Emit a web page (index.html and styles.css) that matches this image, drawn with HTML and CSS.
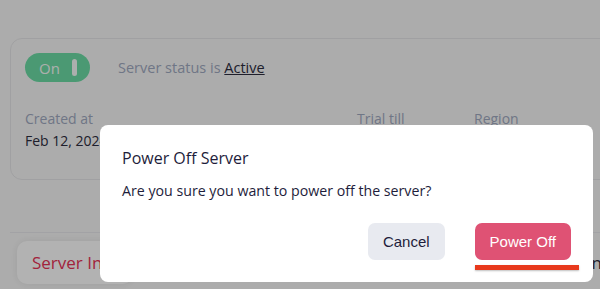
FILE: index.html
```html
<!DOCTYPE html>
<html lang="en">
<head>
  <meta charset="UTF-8" />
  <title>Server</title>
  <link rel="stylesheet" href="styles.css">
</head>
<body>

  <div class="page">
    <!-- Server card -->
    <div class="card">
      <div class="status-row">
        <div class="toggle">
          <span>On</span>
          <span class="knob"></span>
        </div>
        <p class="status">Server status is <a href="#">Active</a></p>
      </div>
      <div class="meta">
        <div>
          <div class="label">Created at</div>
          <div class="value">Feb 12, 2024</div>
        </div>
        <div>
          <div class="label">Trial till</div>
          <div class="value">Mar 12, 2024</div>
        </div>
        <div>
          <div class="label">Region</div>
          <div class="value">Frankfurt</div>
        </div>
      </div>
    </div>

    <!-- Tabs -->
    <div class="tabs">
      <div class="tab active">Server Info</div>
      <div class="tab last">Domain</div>
    </div>
  </div>

  <div class="overlay">
    <div class="dialog">
      <h2>Power Off Server</h2>
      <p>Are you sure you want to power off the server?</p>
      <div class="actions">
        <button class="cancel">Cancel</button>
        <button class="danger">Power Off</button>
        <span class="mark"></span>
      </div>
    </div>
  </div>

</body>
</html>
```

FILE: styles.css
```css
html, body {
  margin: 0;
  height: 100%;
  overflow: hidden;
}

body {
  font-family: 'Open Sans', sans-serif;
  background-color: #f7f7f7;
  color: #2f2f44;
}

.page {
  padding: 38px 0 0 10px;
}

.card {
  width: 700px;
  border: 1px solid #e6e6e8;
  border-radius: 12px;
  padding: 14px 14px 28px 14px;
}

.status-row {
  display: flex;
  align-items: center;
  gap: 28px;
}

.toggle {
  display: flex;
  align-items: center;
  justify-content: space-between;
  box-sizing: border-box;
  width: 65px;
  height: 29px;
  padding: 0 13px 0 14px;
  border-radius: 15px;
  background: #6cdca5;
  color: #f6fbf8;
  font-size: 15px;
}

.knob {
  width: 5px;
  height: 17px;
  border-radius: 3px;
  background: #f6fbf8;
}

.status {
  margin: 0;
  font-size: 14.5px;
  color: #a0a9c0;
}

.status a {
  color: #2d2d40;
}

.meta {
  display: grid;
  grid-template-columns: 332px 117px auto;
  margin-top: 27px;
}

.label {
  font-size: 14px;
  color: #a0a9c0;
  line-height: 20px;
}

.value {
  font-size: 14px;
  color: #2d2d40;
  line-height: 20px;
  margin-top: 2px;
}

.tabs {
  display: flex;
  width: 600px;
  margin-top: 52px;
  padding: 8px 0 0 7px;
  border-top: 1px solid #e9e9ec;
}

.tab {
  font-size: 17px;
  padding: 10px 15px;
  color: #2d2d40;
}

.tab.last {
  margin-left: auto;
}

.tab.active {
  background: #fff;
  color: #e93357;
  border-radius: 10px;
  box-shadow: 0 0 8px rgba(0,0,0,0.08);
}

.overlay {
  position: fixed;
  inset: 0;
  background: rgba(0,0,0,0.3);
}

.dialog {
  position: absolute;
  left: 100px;
  top: 125px;
  width: 493px;
  box-sizing: border-box;
  background: white;
  border-radius: 8px;
  padding: 22px 22px 22px 22px;
  color: #1e1d3b;
}

.dialog h2 {
  margin: 0;
  font-size: 16px;
  font-weight: normal;
  line-height: 22px;
}

.dialog p {
  margin: 11px 0 0;
  font-size: 14.2px;
  line-height: 22px;
}

.actions {
  position: relative;
  display: flex;
  justify-content: flex-end;
  gap: 30px;
  margin-top: 21px;
}

.actions button {
  height: 37px;
  border: none;
  border-radius: 7px;
  font-family: 'Liberation Sans', Arial, sans-serif;
  font-size: 15px;
  padding: 0 15px;
  cursor: pointer;
}

.cancel {
  background: #e8eaf0;
  color: #1e1d3b;
}

.danger {
  background: #df5274;
  color: white;
}

.mark {
  position: absolute;
  right: -8px;
  top: 42px;
  width: 104px;
  height: 5px;
  background: #e8391c;
  box-shadow: 0 1px 2px rgba(0,0,0,0.25);
}
```
